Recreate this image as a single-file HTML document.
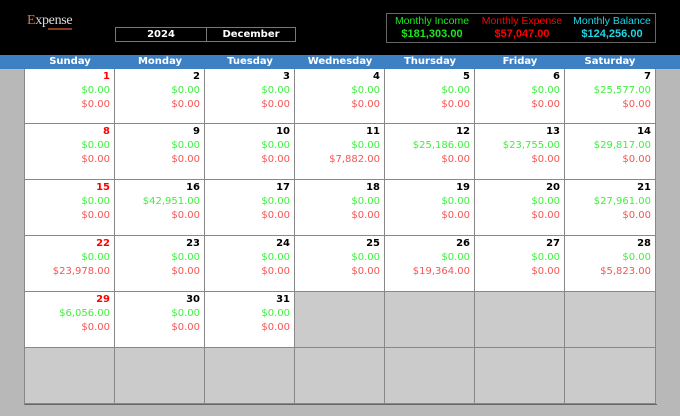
<!DOCTYPE html><html><head><style>
*{margin:0;padding:0;box-sizing:border-box}
body{width:680px;height:416px;background:#b8b8b8;position:relative;overflow:hidden;font-family:"DejaVu Sans","Liberation Sans",sans-serif}
.top{position:absolute;left:0;top:0;width:680px;height:55px;background:#000}
.logo{position:absolute;left:27px;top:13px;font-family:"Liberation Serif",serif;font-size:14px;color:#ddd;letter-spacing:-0.3px}
.logo span{color:#d2783c}
.logo i{position:absolute;left:21px;top:15px;width:24px;height:2px;background:#8a3a1a}
.sel{position:absolute;top:27px;height:15px;border:1px solid #777;color:#fff;font-size:10px;font-weight:bold;text-align:center;line-height:13px}
.sum{position:absolute;left:386px;top:13px;width:270px;height:30px;border:1px solid #666}
.sum div{position:absolute;top:1px;width:90px;text-align:center;font-size:10.5px;line-height:13px;font-family:"Liberation Sans",sans-serif}
.sum b{display:block;font-size:11px}
.bar{position:absolute;left:0;top:55px;width:680px;height:14px;background:#3d80c4}
.bar div{position:absolute;top:0;width:90px;text-align:center;color:#fff;font-size:10px;font-weight:bold;line-height:14px}
.c{position:absolute;background:#fff;border-right:1px solid #888;border-bottom:1px solid #888;text-align:right;padding-right:4px;font-size:10px;line-height:14px;padding-top:1px}
.c.g{background:#cbcbcb}
.c b{display:block;color:#000}
.c b.r{color:#f00}
.c .i{color:#3fef3f}.c .e{color:#f45555}
</style></head><body>
<div class="top"></div>
<div class="logo"><span>E</span>xpense<i></i></div>
<div class="sel" style="left:115px;width:92px">2024</div>
<div class="sel" style="left:206px;width:90px">December</div>
<div class="sum">
<div style="left:0;color:#1ee61e">Monthly Income<b>$181,303.00</b></div>
<div style="left:90px;color:#f00">Monthly Expense<b>$57,047.00</b></div>
<div style="left:180px;color:#1ed6e6">Monthly Balance<b>$124,256.00</b></div>
</div>
<div class="bar">
<div style="left:25px">Sunday</div><div style="left:115px">Monday</div><div style="left:205px">Tuesday</div><div style="left:295px">Wednesday</div><div style="left:385px">Thursday</div><div style="left:475px">Friday</div><div style="left:565px">Saturday</div>
</div>
<div style="position:absolute;left:24px;top:69px;width:633px;height:336px;border-left:1px solid #888;border-bottom:1px solid #666"></div>
<div id="g"></div>
<script>
var xs=[25,115,205,295,385,475,565,656],ys=[69,124,180,236,292,348,404];
var d={7:["$25,577.00","$0.00"],11:["$0.00","$7,882.00"],12:["$25,186.00","$0.00"],13:["$23,755.00","$0.00"],14:["$29,817.00","$0.00"],16:["$42,951.00","$0.00"],21:["$27,961.00","$0.00"],22:["$0.00","$23,978.00"],26:["$0.00","$19,364.00"],28:["$0.00","$5,823.00"],29:["$6,056.00","$0.00"]};
var h="";
for(var r=0;r<6;r++)for(var c=0;c<7;c++){var n=r*7+c+1;var st="left:"+xs[c]+"px;top:"+ys[r]+"px;width:"+(xs[c+1]-xs[c])+"px;height:"+(ys[r+1]-ys[r])+"px";
if(n>31){h+='<div class="c g" style="'+st+'"></div>';continue;}
var v=d[n]||["$0.00","$0.00"];
h+='<div class="c" style="'+st+'"><b'+(c==0?' class="r"':'')+'>'+n+'</b><div class="i">'+v[0]+'</div><div class="e">'+v[1]+'</div></div>';}
document.getElementById("g").innerHTML=h;
</script>
</body></html>
